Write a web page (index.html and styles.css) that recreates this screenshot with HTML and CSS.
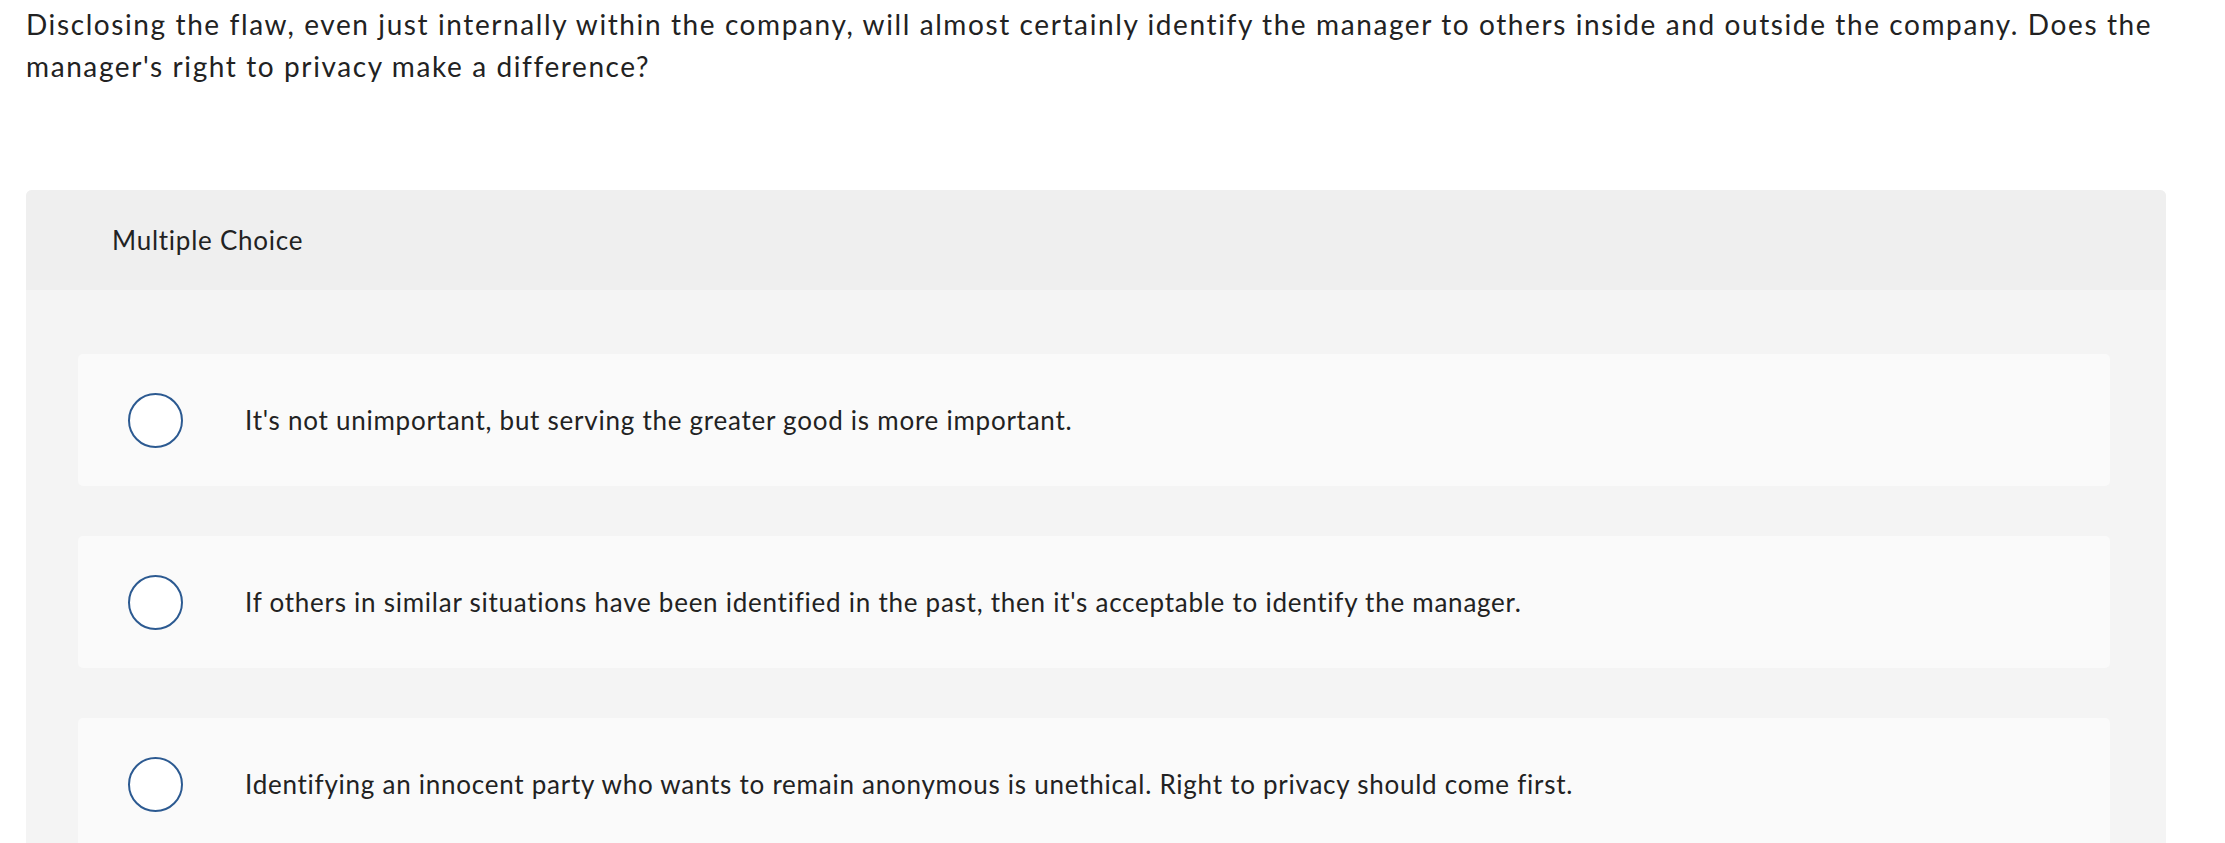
FILE: index.html
```html
<!DOCTYPE html>
<html>
<head>
<meta charset="utf-8">
<link rel="stylesheet" href="styles.css">
</head>
<body>
<div class="page">
  <p class="question">Disclosing the flaw, even just internally within the company, will almost certainly identify the manager to others inside and outside the company. Does the manager's right to privacy make a difference?</p>
  <section class="card">
    <header class="card-head">Multiple Choice</header>
    <div class="card-body">
      <div class="option"><span class="radio"></span><span class="label">It's not unimportant, but serving the greater good is more important.</span></div>
      <div class="option"><span class="radio"></span><span class="label">If others in similar situations have been identified in the past, then it's acceptable to identify the manager.</span></div>
      <div class="option"><span class="radio"></span><span class="label">Identifying an innocent party who wants to remain anonymous is unethical. Right to privacy should come first.</span></div>
    </div>
  </section>
</div>
</body>
</html>
```
FILE: styles.css
```css
html, body {
  margin: 0;
  padding: 0;
  background: #ffffff;
}
body {
  font-family: "Lato", "Noto Sans", sans-serif;
  color: #222222;
  overflow: hidden;
  height: 843px;
  letter-spacing: 0.75px;
}
.page {
  padding: 0 59px 0 26px;
}
.question {
  margin: 0;
  padding-top: 3px;
  font-size: 28px;
  line-height: 42px;
  letter-spacing: 1.6px;
}
.card {
  margin-top: 103px;
  border-radius: 6px;
  overflow: hidden;
  background: #f4f4f4;
}
.card-head {
  background: #efefef;
  height: 100px;
  padding-left: 86px;
  display: flex;
  align-items: center;
  font-size: 26px;
}
.card-body {
  padding: 64px 56px 40px 52px;
  display: flex;
  flex-direction: column;
  gap: 50px;
}
.option {
  background: #fafafa;
  border-radius: 5px;
  height: 132px;
  display: flex;
  align-items: center;
  padding-left: 50px;
}
.radio {
  flex: none;
  width: 51px;
  height: 51px;
  border: 2px solid #2c5a91;
  border-radius: 50%;
  background: #ffffff;
  margin-right: 62px;
}
.label {
  font-size: 26px;
}
```
